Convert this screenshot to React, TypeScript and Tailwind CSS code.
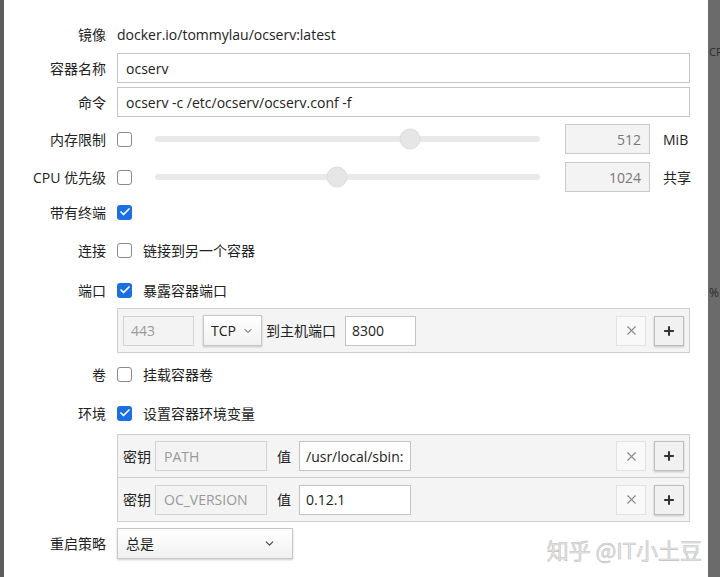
import { ChevronDown, Check, X, Plus } from "lucide-react";

const font = { fontFamily: '"Open Sans", "Noto Sans CJK SC", sans-serif' };

const Label = ({ children }: { children: React.ReactNode }) => (
  <div className="w-[102px] shrink-0 text-right text-[14px] text-[#222]">{children}</div>
);

const Box = ({ checked }: { checked?: boolean }) =>
  checked ? (
    <span className="flex h-[15px] w-[15px] shrink-0 items-center justify-center rounded-[3px] bg-[#1b6fe0]">
      <Check className="h-[12px] w-[12px] text-white" strokeWidth={3.5} />
    </span>
  ) : (
    <span className="block h-[15px] w-[15px] shrink-0 rounded-[3px] border border-[#8a8a8a] bg-white" />
  );

const Slider = ({ pos }: { pos: number }) => (
  <div className="relative ml-[23px] h-[6px] w-[385px] shrink-0 rounded-full bg-[#e9e9e9]">
    <span
      className="absolute top-1/2 h-[21px] w-[21px] -translate-x-1/2 -translate-y-1/2 rounded-full border border-[#ddd] bg-[#e6e6e6]"
      style={{ left: pos }}
    />
  </div>
);

const RowButtons = () => (
  <div className="ml-auto flex items-center gap-[8px]">
    <div className="flex h-[30px] w-[30px] items-center justify-center border border-[#e2e2e2] bg-[#f9f9f9]">
      <X className="h-[15px] w-[15px] text-[#8a8a8a]" strokeWidth={1.8} />
    </div>
    <div className="flex h-[30px] w-[30px] items-center justify-center border border-[#bdbdbd] bg-[#f1f1f1] shadow-[0_1px_2px_rgba(0,0,0,0.2)]">
      <Plus className="h-[14px] w-[14px] text-[#333]" strokeWidth={3.5} />
    </div>
  </div>
);

export default function App() {
  return (
    <div className="relative h-[577px] w-[720px] overflow-hidden" style={font}>
      <div className="relative h-[577px] w-[720px] overflow-hidden border-l-[4px] border-r-[12px] border-l-[#5c5c5c] border-r-[#6b6b6b] bg-white">
        <div className="relative h-full pr-[18px] pt-[19px]">
          {/* 镜像 */}
          <div className="flex h-[30px] items-center gap-[11px]">
            <Label>镜像</Label>
            <span className="text-[14px] text-[#222]">docker.io/tommylau/ocserv:latest</span>
          </div>
          <div className="mt-[4px] flex h-[30px] items-center gap-[11px]">
            <Label>容器名称</Label>
            <div className="flex h-[30px] flex-1 items-center border border-[#c4c4c4] px-[8px] text-[14px] text-[#222]">ocserv</div>
          </div>
          <div className="mt-[4px] flex h-[30px] items-center gap-[11px]">
            <Label>命令</Label>
            <div className="flex h-[30px] flex-1 items-center border border-[#c4c4c4] px-[8px] text-[14px] text-[#222]">
              ocserv -c /etc/ocserv/ocserv.conf -f
            </div>
          </div>
          {/* memory */}
          <div className="mt-[7px] flex h-[30px] items-center">
            <Label>内存限制</Label>
            <span className="ml-[11px]">
              <Box />
            </span>
            <Slider pos={255} />
            <div className="ml-[25px] flex h-[30px] w-[85px] shrink-0 items-center justify-end border border-[#c9c9c9] bg-[#f3f3f3] px-[8px] text-[14px] text-[#777]">512</div>
            <span className="ml-[13px] whitespace-nowrap text-[14px] text-[#222]">MiB</span>
          </div>
          <div className="mt-[8px] flex h-[30px] items-center">
            <Label>CPU 优先级</Label>
            <span className="ml-[11px]">
              <Box />
            </span>
            <Slider pos={182} />
            <div className="ml-[25px] flex h-[30px] w-[85px] shrink-0 items-center justify-end border border-[#c9c9c9] bg-[#f3f3f3] px-[8px] text-[14px] text-[#777]">1024</div>
            <span className="ml-[13px] whitespace-nowrap text-[14px] text-[#222]">共享</span>
          </div>
          <div className="mt-[8px] flex h-[24px] items-center gap-[11px]">
            <Label>带有终端</Label>
            <Box checked />
          </div>
          <div className="mt-[14px] flex h-[24px] items-center gap-[11px]">
            <Label>连接</Label>
            <Box />
            <span className="text-[14px] text-[#222]">链接到另一个容器</span>
          </div>
          <div className="mt-[16px] flex h-[24px] items-center gap-[11px]">
            <Label>端口</Label>
            <Box checked />
            <span className="text-[14px] text-[#222]">暴露容器端口</span>
          </div>
          <div className="mt-[6px] flex">
            <div className="w-[113px] shrink-0" />
            <div className="flex h-[45px] flex-1 items-center border border-[#cfcfcf] bg-[#f4f4f4] px-[5px]">
              <div className="flex h-[30px] w-[71px] items-center border border-[#d2d2d2] bg-[#f3f3f3] px-[7px] text-[14px] text-[#999]">443</div>
              <div className="ml-[9px] flex h-[31px] w-[59px] items-center justify-between border border-[#c6c6c6] bg-gradient-to-b from-white to-[#f1f1f1] px-[7px] text-[14px] text-[#222] shadow-[0_1px_2px_rgba(0,0,0,0.2)]">
                TCP
                <ChevronDown className="h-[12px] w-[12px] text-[#444]" />
              </div>
              <span className="ml-[4px] text-[14px] text-[#222]">到主机端口</span>
              <div className="ml-[9px] flex h-[30px] w-[71px] items-center border border-[#c4c4c4] bg-white px-[6px] text-[14px] text-[#222]">8300</div>
              <RowButtons />
            </div>
          </div>
          <div className="mt-[9px] flex h-[24px] items-center gap-[11px]">
            <Label>卷</Label>
            <Box />
            <span className="text-[14px] text-[#222]">挂载容器卷</span>
          </div>
          <div className="mt-[15px] flex h-[24px] items-center gap-[11px]">
            <Label>环境</Label>
            <Box checked />
            <span className="text-[14px] text-[#222]">设置容器环境变量</span>
          </div>
          <div className="mt-[9px] flex">
            <div className="w-[113px] shrink-0" />
            <div className="flex-1 border border-[#cfcfcf] bg-[#f4f4f4]">
              {[
                ["PATH", "/usr/local/sbin:"],
                ["OC_VERSION", "0.12.1"],
              ].map(([k, v], i) => (
                <div
                  key={k}
                  className={`flex h-[43px] items-center px-[5px] ${i === 0 ? "border-b border-[#cfcfcf]" : ""}`}
                >
                  <span className="text-[14px] text-[#222]">密钥</span>
                  <div className="ml-[4px] flex h-[30px] w-[112px] items-center border border-[#d2d2d2] bg-[#f3f3f3] px-[8px] text-[14px] text-[#999]">{k}</div>
                  <span className="ml-[10px] text-[14px] text-[#222]">值</span>
                  <div className="ml-[8px] flex h-[30px] w-[112px] items-center overflow-hidden whitespace-nowrap border border-[#c4c4c4] bg-white px-[6px] text-[14px] text-[#222]">{v}</div>
                  <RowButtons />
                </div>
              ))}
            </div>
          </div>
          <div className="mt-[6px] flex h-[30px] items-center gap-[11px]">
            <Label>重启策略</Label>
            <div className="flex h-[31px] w-[176px] items-center justify-between border border-[#c6c6c6] bg-gradient-to-b from-white to-[#f1f1f1] pl-[8px] pr-[16px] text-[14px] text-[#222] shadow-[0_1px_2px_rgba(0,0,0,0.2)]">
              总是
              <ChevronDown className="h-[13px] w-[13px] text-[#444]" />
            </div>
          </div>
          {/* watermark */}
          <div
            className="absolute bottom-[11px] right-[6px] text-[22px] text-[#e8e8e8]"
            style={{ WebkitTextStroke: "0.6px #c0c0c0", fontFamily: '"Noto Sans CJK SC", sans-serif' }}
          >
            知乎 @IT小土豆
          </div>
        </div>
      </div>
      {/* bits of the window behind the dialog */}
      <span className="absolute left-[709px] top-[46px] text-[11px] leading-none text-[#2b2b2b]">CP</span>
      <span className="absolute left-[709px] top-[287px] text-[12px] leading-none text-[#2b2b2b]">%</span>
    </div>
  );
}
